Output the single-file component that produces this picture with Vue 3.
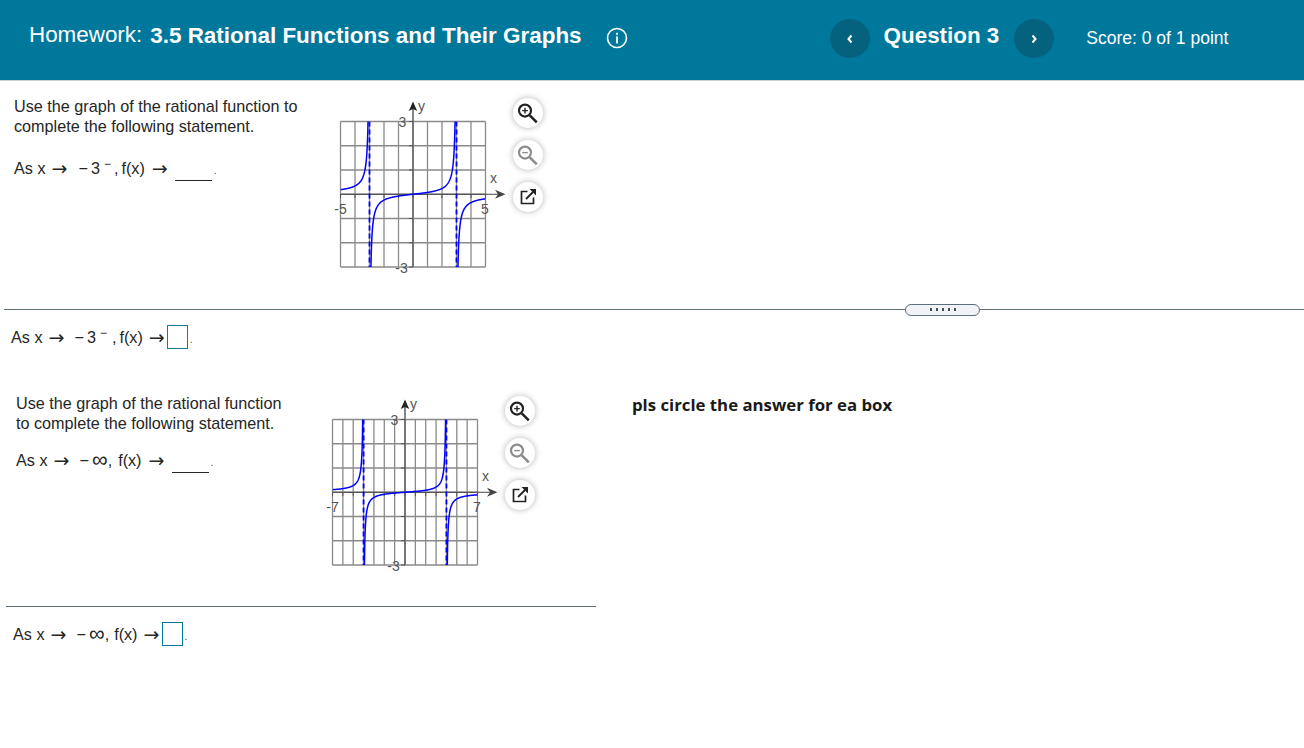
<script setup>
import { computed } from 'vue'

const left = 10.5
const top = 25.5
const width = 145
const height = 145.5

const makeGraph = (id, xMax, asym, k) => {
  const toX = (x) => left + ((x + xMax) / (2 * xMax)) * width
  const toY = (y) => top + ((3 - y) / 6) * height
  const f = (x) => (-k * x) / (x * x - asym * asym)
  const branch = (from, to) => {
    let d = ''
    const steps = 220
    for (let i = 0; i <= steps; i++) {
      const x = from + (to - from) * (i / steps)
      const y = Math.max(-6, Math.min(6, f(x)))
      d += (i ? 'L' : 'M') + toX(x).toFixed(2) + ' ' + toY(y).toFixed(2)
    }
    return d
  }
  const vLines = []
  for (let i = 0; i <= 2 * xMax; i++) vLines.push(toX(i - xMax))
  const hLines = []
  for (let i = 0; i <= 6; i++) hLines.push(toY(i - 3))
  return {
    id,
    xMax,
    vLines,
    hLines,
    curves: [
      branch(-xMax, -asym - 0.01),
      branch(-asym + 0.01, asym - 0.01),
      branch(asym + 0.01, xMax)
    ],
    asymptotes: [toX(-asym), toX(asym)],
    originX: toX(0),
    originY: toY(0)
  }
}

const problems = computed(() => [
  {
    key: 'first',
    lines: ['Use the graph of the rational function to', 'complete the following statement.'],
    limit: 'minus3',
    graph: makeGraph('clipA', 5, 3, 0.6)
  },
  {
    key: 'second',
    lines: ['Use the graph of the rational function', 'to complete the following statement.'],
    limit: 'infinity',
    graph: makeGraph('clipB', 7, 4, 0.5),
    note: 'pls circle the answer for ea box'
  }
])
</script>

<template>
  <div class="page">
    <header class="top-bar">
      <span class="hw-label">Homework:</span>
      <h1 class="hw-title">3.5 Rational Functions and Their Graphs</h1>
      <svg class="info" width="22" height="22" viewBox="0 0 22 22">
        <circle cx="11" cy="11" r="9.5" fill="none" stroke="#fff" stroke-width="1.6" />
        <rect x="10.1" y="9.4" width="1.9" height="7" fill="#fff" />
        <rect x="10.1" y="5.8" width="1.9" height="2" fill="#fff" />
      </svg>
      <div class="nav">
        <button class="nav-btn">
          <svg width="10" height="12" viewBox="0 0 10 12"><path d="M6.5 2.5 3.5 6l3 3.5" fill="none" stroke="#fff" stroke-width="2" /></svg>
        </button>
        <span class="question-no">Question 3</span>
        <button class="nav-btn">
          <svg width="10" height="12" viewBox="0 0 10 12"><path d="M3.5 2.5 6.5 6l-3 3.5" fill="none" stroke="#fff" stroke-width="2" /></svg>
        </button>
      </div>
      <span class="score">Score: 0 of 1 point</span>
    </header>

    <section v-for="p in problems" :key="p.key" :class="['problem', p.key]">
      <div class="q-row">
        <div class="q-text">
          <p class="q-lines">
            <span v-for="l in p.lines" :key="l">{{ l }}</span>
          </p>
          <div class="math statement">
            <span>As x</span><span class="arrow">→</span>
            <template v-if="p.limit === 'minus3'">
              <span class="neg">−</span><span>3</span><span class="sup">−</span><span class="comma">,</span>
            </template>
            <template v-else>
              <span class="neg">−</span><span class="inf">∞</span><span class="comma wide">,</span>
            </template>
            <span class="fx">f(x)</span><span class="arrow">→</span>
            <span class="blank"></span><span class="dot">.</span>
          </div>
        </div>

        <svg class="graph" width="180" height="185" viewBox="0 0 180 185">
          <defs>
            <clipPath :id="p.graph.id">
              <rect x="10.5" y="25.5" width="145" height="145.5" />
            </clipPath>
          </defs>
          <line v-for="x in p.graph.vLines" :key="'v' + x" :x1="x" :x2="x" y1="25.5" y2="171" class="grid" />
          <line v-for="y in p.graph.hLines" :key="'h' + y" x1="10.5" x2="155.5" :y1="y" :y2="y" class="grid" />
          <line :x1="p.graph.originX" :x2="p.graph.originX" y1="8" y2="171" class="y-axis" />
          <line x1="10.5" x2="170" :y1="p.graph.originY" :y2="p.graph.originY" class="x-axis" />
          <line v-for="x in p.graph.vLines" :key="'t' + x" :x1="x" :x2="x" :y1="p.graph.originY" :y2="p.graph.originY + 4" class="tick" />
          <line v-for="y in p.graph.hLines" :key="'u' + y" :x1="p.graph.originX - 4" :x2="p.graph.originX" :y1="y" :y2="y" class="tick" />
          <path d="M83 5.5 78.8 15 83 13 87.2 15Z" fill="#222" />
          <path :d="`M175.5 ${p.graph.originY} 165 ${p.graph.originY - 4.5} 168 ${p.graph.originY} 165 ${p.graph.originY + 4.5}Z`" fill="#444" />
          <g :clip-path="`url(#${p.graph.id})`">
            <line v-for="a in p.graph.asymptotes" :key="a" :x1="a" :x2="a" y1="25.5" y2="171" class="asym" />
            <path v-for="c in p.graph.curves" :key="c" :d="c" class="curve" />
          </g>
          <text x="88" y="15" class="lbl">y</text>
          <text x="160" y="87" class="lbl">x</text>
          <text x="72.5" y="30.5" class="lbl" text-anchor="middle">3</text>
          <text x="71.5" y="176.5" class="lbl" text-anchor="middle">-3</text>
          <text x="10.5" y="118" class="lbl" text-anchor="middle">-{{ p.graph.xMax }}</text>
          <text x="155" y="118" class="lbl" text-anchor="middle">{{ p.graph.xMax }}</text>
        </svg>

        <div class="tools">
          <button class="tool">
            <svg width="30" height="30" viewBox="0 0 30 30">
              <circle cx="12" cy="12.6" r="6" fill="none" stroke="#222" stroke-width="2.2" />
              <path d="M9.2 12.6h5.6M12 9.8v5.6" stroke="#222" stroke-width="1.4" />
              <path d="M16.8 17.4l7 7" stroke="#222" stroke-width="2.6" />
            </svg>
          </button>
          <button class="tool">
            <svg width="30" height="30" viewBox="0 0 30 30">
              <circle cx="12" cy="12.6" r="6" fill="none" stroke="#8c8c8c" stroke-width="2.2" />
              <path d="M9.2 12.6h5.6" stroke="#8c8c8c" stroke-width="1.4" />
              <path d="M16.8 17.4l7 7" stroke="#8c8c8c" stroke-width="2.6" />
            </svg>
          </button>
          <button class="tool">
            <svg width="30" height="30" viewBox="0 0 30 30">
              <path d="M14.5 9.5h-6v12h12v-6" fill="none" stroke="#222" stroke-width="1.7" />
              <path d="M13 17l7-7" stroke="#222" stroke-width="1.8" />
              <path d="M16.5 7H23v6.5z" fill="#222" />
            </svg>
          </button>
        </div>

        <p v-if="p.note" class="note">{{ p.note }}</p>
      </div>

      <div class="divider">
        <span class="rule"></span>
        <template v-if="p.key === 'first'">
          <span class="handle"><i></i><i></i><i></i><i></i><i></i></span>
          <span class="rule"></span>
        </template>
      </div>

      <div class="math answer">
        <span>As x</span><span class="arrow">→</span>
        <template v-if="p.limit === 'minus3'">
          <span class="neg">−</span><span>3</span><span class="sup">−</span><span class="comma">,</span>
        </template>
        <template v-else>
          <span class="neg">−</span><span class="inf">∞</span><span class="comma wide">,</span>
        </template>
        <span class="fx">f(x)</span><span class="arrow tight">→</span>
        <span class="box"></span><span class="dot">.</span>
      </div>
    </section>
  </div>
</template>

<style>
html,
body {
  background: #fff;
}
</style>

<style scoped>
.page {
  width: 1304px;
  height: 748px;
  overflow: hidden;
  font-family: "Liberation Sans", Arial, sans-serif;
  color: #262626;
  font-size: 16.2px;
}
.top-bar {
  height: 80px;
  box-sizing: content-box;
  background: #00789c;
  border-bottom: 1px solid #c9d0d4;
  color: #fff;
  display: flex;
  align-items: center;
  padding-left: 29px;
}
.hw-label {
  font-size: 22.4px;
  margin-top: -10px;
}
.hw-title {
  font-size: 22.45px;
  font-weight: 700;
  margin: -9px 0 0 8px;
}
.info {
  margin: -4px 0 0 24px;
}
.nav {
  display: flex;
  align-items: center;
  margin: -4px 0 0 202px;
}
.nav-btn {
  width: 40px;
  height: 39px;
  border-radius: 50%;
  border: 0;
  padding: 0;
  background: #05627f;
  display: flex;
  align-items: center;
  justify-content: center;
  margin-top: 1px;
}
.question-no {
  font-size: 22.4px;
  font-weight: 700;
  margin: -4px 15px 0 14px;
}
.score {
  font-size: 17.5px;
  margin: -4px 0 0 32px;
}
.q-row {
  display: flex;
  align-items: flex-start;
}
.first .q-row {
  height: 207px;
  padding: 15px 0 0 14px;
}
.second .q-row {
  height: 212px;
  padding: 0 0 0 16px;
  margin-top: 45px;
}
.q-text {
  width: 316px;
  flex: none;
}
.second .q-text {
  width: 306px;
  margin-top: -1px;
}
.q-lines {
  margin: 0;
  line-height: 20px;
}
.q-lines span {
  display: block;
}
.math {
  display: flex;
  align-items: center;
  height: 20px;
  white-space: pre;
}
.first .statement {
  margin-top: 22px;
}
.second .statement {
  margin-top: 17px;
}
.arrow {
  width: 16px;
  margin: 0 6px 0 6px;
  font-family: "DejaVu Sans", sans-serif;
  font-size: 19px;
  line-height: 1;
}
.arrow.tight {
  margin-right: 2px;
}
.neg {
  margin: 0 3px 0 4px;
}
.first .statement .neg {
  margin-left: 5px;
}
.sup {
  font-size: 12px;
  margin: -8px 5px 0 4px;
}
.statement .sup {
  margin-right: 3px;
}
.comma.wide {
  margin-right: 2px;
}
.statement .comma.wide {
  margin-right: 3px;
}
.inf {
  font-size: 22px;
  line-height: 1;
}
.fx {
  margin: 0 0 0 3px;
}
.statement .fx {
  margin: 0 1px 0 3px;
}
.blank {
  width: 37px;
  height: 20px;
  border-bottom: 1px solid #262626;
  margin: 5px 2px 0 1px;
}
.dot {
  font-size: 11px;
  color: #555;
  margin-top: 3px;
}
.graph {
  flex: none;
}
.grid {
  stroke: #8a8a8a;
  stroke-width: 1.3;
}
.y-axis {
  stroke: #666;
  stroke-width: 1.6;
}
.x-axis {
  stroke: #444;
  stroke-width: 1.2;
}
.tick {
  stroke: #555;
  stroke-width: 1;
}
.asym {
  stroke: #0000ff;
  stroke-width: 1.8;
  stroke-dasharray: 5 3;
}
.curve {
  fill: none;
  stroke: #0000ff;
  stroke-width: 1.5;
}
.lbl {
  font-family: "Liberation Sans", Arial, sans-serif;
  font-size: 14px;
  fill: #555;
}
.tools {
  display: flex;
  flex-direction: column;
  gap: 12px;
  margin: 2px 0 0 3px;
  flex: none;
}
.tool {
  width: 30px;
  height: 30px;
  padding: 0;
  border: 0;
  border-radius: 50%;
  background: #fff;
  box-shadow: 0 0 6px rgba(0, 0, 0, 0.3);
  display: block;
}
.tool svg {
  display: block;
}
.note {
  margin: 0 0 0 97px;
  font-family: "Open Sans", sans-serif;
  font-weight: 700;
  font-size: 16.8px;
  line-height: 22px;
  color: #1a1a1a;
}
.divider {
  display: flex;
  align-items: center;
  height: 13px;
  margin-left: 4px;
}
.divider .rule {
  flex: 1;
  height: 1px;
  background: #5f6f78;
}
.handle {
  width: 75px;
  height: 12px;
  box-sizing: border-box;
  border: 1px solid #5b6f7d;
  border-radius: 6px;
  background: #f1f3f6;
  display: flex;
  align-items: center;
  justify-content: center;
  gap: 4px;
}
.first .divider .rule:first-child {
  flex: none;
  width: 901px;
}
.handle i {
  width: 2px;
  height: 3px;
  background: #444d55;
}
.second .divider {
  height: 1px;
  width: 590px;
  margin-left: 6px;
}
.answer {
  height: 24px;
}
.first .answer {
  margin-top: 9px;
  padding-left: 11px;
}
.second .answer {
  margin-top: 15px;
  padding-left: 13px;
}
.box {
  width: 21px;
  height: 24px;
  box-sizing: border-box;
  border: 1px solid #1a7a96;
  margin-right: 2px;
}
.second .box {
  border-width: 1.5px;
  border-color: #007a9c;
}
</style>
